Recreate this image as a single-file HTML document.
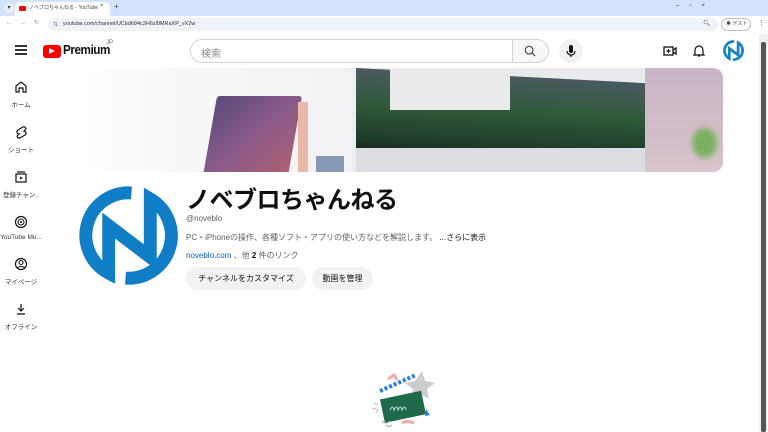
<!DOCTYPE html>
<html><head><meta charset="utf-8"><style>
*{margin:0;padding:0;box-sizing:border-box}
body{width:768px;height:432px;overflow:hidden;background:#fff;font-family:"Liberation Sans","Noto Sans CJK JP",sans-serif;position:relative;color:#0f0f0f}
.abs{position:absolute}
</style></head><body>
<!-- chrome tab bar -->
<div class="abs" style="left:0;top:0;width:768px;height:16px;background:#d3e3fd"></div>
<div class="abs" style="left:4px;top:3px;width:10px;height:10px;border-radius:5px;background:#e8eefa;font-size:6px;text-align:center;line-height:10px;color:#333">▾</div>
<div class="abs" style="left:15px;top:2px;width:95px;height:14px;background:#fff;border-radius:5px 5px 0 0"></div>
<div class="abs" style="left:19px;top:6px;width:7px;height:5px;background:#f00;border-radius:1px"></div>
<div class="abs" style="left:29px;top:4px;font-size:5px;color:#444">ノベブロちゃんねる - YouTube</div>
<div class="abs" style="left:100px;top:3px;font-size:6px;color:#444">×</div>
<div class="abs" style="left:114px;top:2px;font-size:8px;color:#444">+</div>
<div class="abs" style="left:676px;top:3px;font-size:6px;color:#444;letter-spacing:10px">–▫×</div>
<!-- address bar -->
<div class="abs" style="left:0;top:16px;width:768px;height:17px;background:#fff"></div>
<div class="abs" style="left:6px;top:19px;font-size:6px;color:#888;letter-spacing:8px">←→↻</div>
<div class="abs" style="left:48px;top:18px;width:670px;height:13px;background:#eef2f9;border-radius:7px"></div>
<div class="abs" style="left:53px;top:21px;font-size:5px;color:#555">⇅</div>
<div class="abs" style="left:63px;top:21px;font-size:5.5px;color:#333">youtube.com/channel/UCbdh94c2H6zl9MRaXP_vX2w</div>
<div class="abs" style="left:703px;top:20px;font-size:6px;color:#555">🔍︎</div>
<div class="abs" style="left:721px;top:18px;width:30px;height:13px;border:1px solid #bbb;border-radius:7px;font-size:5px;line-height:11px;padding-left:4px;color:#444">◉ ゲスト</div>
<div class="abs" style="left:758px;top:19px;font-size:7px;color:#555">⋮</div>
<!-- yt header -->
<div class="abs" style="left:15px;top:45px;width:12px;height:1.5px;background:#333;box-shadow:0 4px 0 #333,0 8px 0 #333"></div>
<div class="abs" style="left:43px;top:45px;width:18px;height:13px;background:#f00;border-radius:3px"></div>
<div class="abs" style="left:49px;top:48px;width:0;height:0;border-left:6px solid #fff;border-top:3.5px solid transparent;border-bottom:3.5px solid transparent"></div>
<div class="abs" style="left:63px;top:42px;font-size:13px;font-weight:bold;letter-spacing:-0.5px;transform:scaleX(0.9);transform-origin:left">Premium</div>
<div class="abs" style="left:106px;top:40px;font-size:6px;color:#666">JP</div>
<div class="abs" style="left:190px;top:39px;width:322px;height:24px;border:1px solid #d3d3d3;border-right:none;border-radius:12px 0 0 12px;font-size:10px;color:#888;padding:5px 0 0 10px">検索</div>
<div class="abs" style="left:512px;top:39px;width:37px;height:24px;border:1px solid #d3d3d3;background:#f8f8f8;border-radius:0 12px 12px 0"></div>
<svg class="abs" style="left:524px;top:45px" width="12" height="12" viewBox="0 0 14 14"><circle cx="6" cy="6" r="4.5" fill="none" stroke="#333" stroke-width="1.2"/><path d="M9.3 9.3L13 13" stroke="#333" stroke-width="1.2"/></svg>
<div class="abs" style="left:559px;top:39px;width:24px;height:24px;border-radius:12px;background:#f2f2f2"></div>
<svg class="abs" style="left:565px;top:44px" width="12" height="14" viewBox="0 0 12 14"><rect x="4" y="1" width="4" height="8" rx="2" fill="#111"/><path d="M2 7a4 4 0 008 0M6 11v2" stroke="#111" stroke-width="1.2" fill="none"/></svg>
<svg class="abs" style="left:663px;top:45px" width="14" height="12" viewBox="0 0 14 12"><rect x="1" y="2" width="9" height="8" fill="none" stroke="#111" stroke-width="1.3"/><path d="M10 5l3-2v6l-3-2M5.5 4v4M3.5 6h4" stroke="#111" stroke-width="1.3" fill="none"/></svg>
<svg class="abs" style="left:693px;top:43px" width="12" height="15" viewBox="0 0 12 15"><path d="M2 11V7a4 4 0 018 0v4l1 1H1zM5 13h2" stroke="#111" stroke-width="1.2" fill="none"/></svg>
<svg class="abs" style="left:723px;top:40px" width="21" height="21" viewBox="0 0 100 100"><path d="M53 7A43 43 0 0 0 30 88L30 40L72 72L72 13A43 43 0 0 1 47 93" stroke="#1a82c8" stroke-width="13" fill="none" stroke-linejoin="miter"/></svg>
<!-- scrollbar -->
<div class="abs" style="left:759px;top:34px;width:9px;height:398px;background:#f1f1f1"></div>
<div class="abs" style="left:761px;top:42px;width:5px;height:390px;background:#555;border-radius:2px"></div>
<!-- sidebar -->
<div class="abs" style="left:0;top:80px;width:42px;text-align:center;font-size:6.5px;color:#333">
<svg width="14" height="14" viewBox="0 0 14 14"><path d="M2 6L7 2l5 4v6H9V8H5v4H2z" fill="none" stroke="#111" stroke-width="1.2"/></svg><div style="margin:3px 0 16px">ホーム</div>
<svg width="14" height="14" viewBox="0 0 14 14"><path d="M9 2L4 5c-2 1 -1 4 1 4l-1 1c-2 1 0 4 2 3l5-3c2-1 1-4-1-4l1-1c2-1 0-4-2-3z" fill="none" stroke="#111" stroke-width="1.2"/></svg><div style="margin:3px 0 16px">ショート</div>
<svg width="14" height="14" viewBox="0 0 14 14"><rect x="2" y="4" width="10" height="8" fill="none" stroke="#111" stroke-width="1.2"/><path d="M3 2h8" stroke="#111" stroke-width="1.2"/><path d="M6 6.5l3 1.5-3 1.5z" fill="#111"/></svg><div style="margin:3px 0 16px">登録チャン..</div>
<svg width="14" height="14" viewBox="0 0 14 14"><circle cx="7" cy="7" r="5.5" fill="none" stroke="#111" stroke-width="1.2"/><circle cx="7" cy="7" r="3" fill="none" stroke="#111" stroke-width="1"/><circle cx="7" cy="7" r="1" fill="#111"/></svg><div style="margin:3px 0 16px">YouTube Mu...</div>
<svg width="14" height="14" viewBox="0 0 14 14"><circle cx="7" cy="7" r="5.5" fill="none" stroke="#111" stroke-width="1.2"/><circle cx="7" cy="5.5" r="2" fill="none" stroke="#111" stroke-width="1.1"/><path d="M3.5 11c1-2 6-2 7 0" fill="none" stroke="#111" stroke-width="1.1"/></svg><div style="margin:3px 0 16px">マイページ</div>
<svg width="14" height="14" viewBox="0 0 14 14"><path d="M7 2v7M4 6l3 3 3-3M3 12h8" fill="none" stroke="#111" stroke-width="1.2"/></svg><div style="margin:3px 0 16px">オフライン</div>
</div>
<!-- banner -->
<div class="abs" style="left:80px;top:68px;width:643px;height:104px;border-radius:0 10px 10px 0;overflow:hidden;background:linear-gradient(90deg,#fff 0,#f7f7f8 120px,#f2f2f4 270px,#eceef2 275px,#e8eaee 290px)">
 <div class="abs" style="left:130px;top:28px;width:85px;height:80px;background:linear-gradient(135deg,#5a4a7a,#8a5a8a 50%,#b06070);transform:skewX(-10deg);border-radius:3px"></div>
 <div class="abs" style="left:218px;top:34px;width:10px;height:70px;background:#e9b8a8"></div>
 <div class="abs" style="left:236px;top:88px;width:28px;height:16px;background:#8899b8"></div>
 <div class="abs" style="left:276px;top:0;width:320px;height:90px;background:linear-gradient(180deg,#4a5a60 0,#2f5a3a 40%,#1e3a2a 80%,#111 100%);transform:skewY(3deg);transform-origin:left top"></div>
 <div class="abs" style="left:310px;top:0;width:120px;height:42px;background:#e8eaec"></div>
 <div class="abs" style="left:276px;top:80px;width:330px;height:24px;background:#dcdde2"></div>
 <div class="abs" style="left:565px;top:0;width:78px;height:104px;background:linear-gradient(180deg,#c8b4c4,#d8c4cc)"></div>
 <div class="abs" style="left:612px;top:60px;width:25px;height:30px;border-radius:50%;background:#7ab060;filter:blur(3px)"></div>
</div>
<!-- channel -->
<svg class="abs" style="left:79px;top:186px" width="99" height="99" viewBox="0 0 100 100"><path d="M53 7A43 43 0 0 0 30 88L30 40L72 72L72 13A43 43 0 0 1 47 93" stroke="#0f7ec6" stroke-width="13" fill="none" stroke-linejoin="miter"/></svg>
<div class="abs" style="left:186px;top:180px;font-size:24px;font-weight:bold;letter-spacing:-0.5px">ノベブロちゃんねる</div>
<div class="abs" style="left:186px;top:214px;font-size:8px;color:#606060">@noveblo</div>
<div class="abs" style="left:186px;top:232px;font-size:8px;color:#606060">PC・iPhoneの操作、各種ソフト・アプリの使い方などを解説します。 <span style="color:#0f0f0f">...さらに表示</span></div>
<div class="abs" style="left:186px;top:250px;font-size:8px;color:#606060"><span style="color:#065fd4">noveblo.com</span> 、他 <b style="color:#0f0f0f">2</b> 件のリンク</div>
<div class="abs" style="left:186px;top:267px;width:120px;height:23px;border-radius:12px;background:#f2f2f2;font-size:8px;line-height:23px;text-align:center">チャンネルをカスタマイズ</div>
<div class="abs" style="left:312px;top:267px;width:61px;height:23px;border-radius:12px;background:#f2f2f2;font-size:8px;line-height:23px;text-align:center">動画を管理</div>
<!-- illustration -->
<svg class="abs" style="left:360px;top:365px" width="80" height="67" viewBox="0 0 80 67">
<path d="M62 6l3 10 10 2-8 6 2 10-9-5-9 5 2-10-8-6 10-2z" fill="#ccc"/>
<path d="M28 14l6-4 3 5" stroke="#f4aaaa" stroke-width="3" fill="none"/>
<path d="M20 26l36-16" stroke="#2b7de9" stroke-width="4" stroke-dasharray="3 2"/>
<rect x="22" y="30" width="42" height="24" fill="#1e6a4a" transform="rotate(-12 42 42)"/>
<path d="M30 45q3-6 4 0q3-6 4 0q3-6 4 0q3-6 4 0" stroke="#cde" fill="none" stroke-width="1"/>
<path d="M66 44l4 6-5 1z" fill="#2b7de9"/>
<path d="M22 56q4 4 8 0M26 60q3 3 6 0" stroke="#8ac" fill="none"/>
<path d="M42 58q5-3 12 0" stroke="#f4aaaa" stroke-width="3" fill="none"/>
<path d="M14 38l4 2M12 44l5-1M16 48l2-4" stroke="#bbb"/>
</svg>
</body></html>
